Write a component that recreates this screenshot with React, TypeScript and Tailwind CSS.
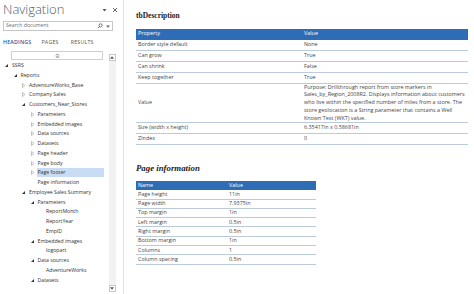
import React from "react";

type Node = { label: string; level: number; state: "open" | "closed" | "leaf"; selected?: boolean };

const tree: Node[] = [
  { label: "SSRS", level: 0, state: "open" },
  { label: "Reports", level: 1, state: "open" },
  { label: "AdventureWorks_Base", level: 2, state: "closed" },
  { label: "Company Sales", level: 2, state: "closed" },
  { label: "Customers_Near_Stores", level: 2, state: "open" },
  { label: "Parameters", level: 3, state: "closed" },
  { label: "Embedded images", level: 3, state: "closed" },
  { label: "Data sources", level: 3, state: "closed" },
  { label: "Datasets", level: 3, state: "closed" },
  { label: "Page header", level: 3, state: "closed" },
  { label: "Page body", level: 3, state: "closed" },
  { label: "Page footer", level: 3, state: "closed", selected: true },
  { label: "Page information", level: 3, state: "leaf" },
  { label: "Employee Sales Summary", level: 2, state: "open" },
  { label: "Parameters", level: 3, state: "open" },
  { label: "ReportMonth", level: 4, state: "leaf" },
  { label: "ReportYear", level: 4, state: "leaf" },
  { label: "EmpID", level: 4, state: "leaf" },
  { label: "Embedded images", level: 3, state: "open" },
  { label: "logopart", level: 4, state: "leaf" },
  { label: "Data sources", level: 3, state: "open" },
  { label: "AdventureWorks", level: 4, state: "leaf" },
  { label: "Datasets", level: 3, state: "open" },
];

const props1: [string, string][] = [
  ["Border style default", "None"],
  ["Can grow", "True"],
  ["Can shrink", "False"],
  ["Keep together", "True"],
];

const pageInfo: [string, string][] = [
  ["Page height", "11in"],
  ["Page width", "7.9375in"],
  ["Top margin", "1in"],
  ["Left margin", "0.5in"],
  ["Right margin", "0.5in"],
  ["Bottom margin", "1in"],
  ["Columns", "1"],
  ["Column spacing", "0.5in"],
];

const purpose = [
  "Purpose: Drillthrough report from store markers in",
  "Sales_by_Region_2008R2. Displays information about customers",
  "who live within the specified number of miles from a store. The",
  "store geolocation is a String parameter that contains a Well",
  "Known Text (WKT) value.",
];

const ui = { fontFamily: '"Open Sans", "Noto Sans", sans-serif' };
const serif = { fontFamily: '"Liberation Serif", serif' };

function Glyph({ state }: { state: Node["state"] }) {
  if (state === "leaf") return <span className="w-[7px] shrink-0" />;
  if (state === "open")
    return (
      <svg width="7" height="7" viewBox="0 0 7 7" className="shrink-0">
        <path d="M5 2 L5 5 L2 5 Z" fill="#333" />
      </svg>
    );
  return (
    <svg width="7" height="7" viewBox="0 0 7 7" className="shrink-0">
      <path d="M2.5 1.5 L5 3.5 L2.5 5.5 Z" fill="none" stroke="#a8a8a8" strokeWidth="0.7" />
    </svg>
  );
}

function NavPane() {
  return (
    <aside className="flex w-[124px] shrink-0 flex-col border-r border-[#e1e1e1] bg-white" style={ui}>
      <div className="flex h-[19px] items-center justify-between pl-[3px] pr-[5px]">
        <span className="text-[13px] font-light leading-none text-[#51606e]">Navigation</span>
        <div className="flex items-center gap-[5px] text-[#555]">
          <svg width="5" height="4" viewBox="0 0 5 4">
            <path d="M0.5 1 L4.5 1 L2.5 3.5 Z" fill="#555" />
          </svg>
          <svg width="6" height="6" viewBox="0 0 6 6">
            <path d="M1 1 L5 5 M5 1 L1 5" stroke="#555" strokeWidth="0.9" />
          </svg>
        </div>
      </div>
      <div className="mx-[3px] mt-[2px] flex h-[10px] w-[110px] items-center justify-between border border-[#c6c6c6] px-[2px]">
        <span className="text-[5.2px] leading-none text-[#6b6b6b]">Search document</span>
        <div className="flex items-center gap-[3px]">
          <svg width="6" height="6" viewBox="0 0 6 6">
            <circle cx="3.6" cy="2.4" r="1.6" fill="none" stroke="#444" strokeWidth="0.7" />
            <path d="M2.5 3.5 L0.8 5.2" stroke="#444" strokeWidth="0.8" />
          </svg>
          <svg width="4" height="3" viewBox="0 0 4 3">
            <path d="M0 0.5 L4 0.5 L2 2.8 Z" fill="#666" />
          </svg>
        </div>
      </div>
      <div className="mt-[9px] flex items-center pl-[3px] text-[5.3px] leading-none tracking-[0.2px]">
        <span className="font-semibold text-[#2b579a]">HEADINGS</span>
        <span className="ml-[10px] text-[#555]">PAGES</span>
        <span className="ml-[12px] text-[#555]">RESULTS</span>
      </div>
      <div className="mt-[6px] flex flex-1">
        <div className="flex w-[108px] flex-col">
          <div className="ml-[11px] flex h-[9px] w-[92px] items-center justify-center border border-[#cfcfcf]">
            <svg width="5" height="5" viewBox="0 0 5 5">
              <path d="M1 2.5 L2.5 1 L4 2.5 M0.8 4 L4.2 4" fill="none" stroke="#444" strokeWidth="0.7" />
            </svg>
          </div>
          <div className="mt-[0.5px] flex flex-col">
            {tree.map((n, i) => (
              <div
                key={i}
                className="flex h-[9.75px] items-center text-[5.2px] leading-none text-[#333]"
                style={{ paddingLeft: 3 + n.level * 8.5 }}
              >
                <Glyph state={n.state} />
                <span
                  className={
                    n.selected
                      ? "ml-[1px] flex h-[9px] w-[67px] items-center bg-[#c8dcf4] pl-[1px]"
                      : "ml-[1px] pl-[1px]"
                  }
                >
                  {n.label}
                </span>
              </div>
            ))}
          </div>
        </div>
        <div className="flex w-[8px] flex-col items-center">
          <div className="mt-[3px] flex h-[7px] w-[7px] items-center justify-center border border-[#c8c8c8] bg-white">
            <svg width="4" height="3" viewBox="0 0 4 3">
              <path d="M0 2.8 L4 2.8 L2 0.3 Z" fill="#555" />
            </svg>
          </div>
          <div className="w-[7px] flex-1 bg-[#f2f2f2]" />
          <div className="mb-[2px] flex h-[7px] w-[7px] items-center justify-center border border-[#c8c8c8] bg-white">
            <svg width="4" height="3" viewBox="0 0 4 3">
              <path d="M0 0.2 L4 0.2 L2 2.7 Z" fill="#555" />
            </svg>
          </div>
        </div>
      </div>
    </aside>
  );
}

function Row({ a, b, h = "h-[11px]", cols }: { a: React.ReactNode; b: React.ReactNode; h?: string; cols: string }) {
  return (
    <div className={`grid items-center border-b border-[#bccbdc] ${h} ${cols}`}>
      <div className="pl-[2px]">{a}</div>
      <div>{b}</div>
    </div>
  );
}

export default function App() {
  const c1 = "grid-cols-[168px_1fr]";
  const c2 = "grid-cols-[93px_1fr]";
  return (
    <div className="flex h-[294px] w-[474px] overflow-hidden bg-white">
      <NavPane />
      <main className="flex flex-1 flex-col pl-[12px] pr-[6px] text-[5.4px] leading-none text-[#444]" style={ui}>
        <h1 className="mt-[12px] text-[7.5px] font-bold leading-none text-[#222]" style={serif}>
          tbDescription
        </h1>
        <div className="mt-[9px] flex flex-col">
          <div className={`grid h-[11px] items-center bg-[#2e6db5] text-white ${c1}`}>
            <div className="pl-[2px]">Property</div>
            <div>Value</div>
          </div>
          {props1.map(([a, b]) => (
            <Row key={a} a={a} b={b} cols={c1} />
          ))}
          <Row
            cols={c1}
            h="h-[39px]"
            a="Value"
            b={
              <div className="flex flex-col leading-[7.8px]">
                {purpose.map((l) => (
                  <span key={l} className="whitespace-nowrap">
                    {l}
                  </span>
                ))}
              </div>
            }
          />
          <Row cols={c1} a="Size (width x height)" b="6.35417in x 0.58681in" />
          <Row cols={c1} a="ZIndex" b="0" />
        </div>
        <h2 className="mt-[19px] text-[8.8px] font-bold italic leading-none text-[#222]" style={serif}>
          Page information
        </h2>
        <div className="mt-[9px] flex w-[180px] flex-col">
          <div className={`grid h-[9px] items-center bg-[#2e6db5] text-white ${c2}`}>
            <div className="pl-[2px]">Name</div>
            <div>Value</div>
          </div>
          {pageInfo.map(([a, b]) => (
            <Row key={a} a={a} b={b} cols={c2} h="h-[9.3px]" />
          ))}
        </div>
      </main>
    </div>
  );
}
